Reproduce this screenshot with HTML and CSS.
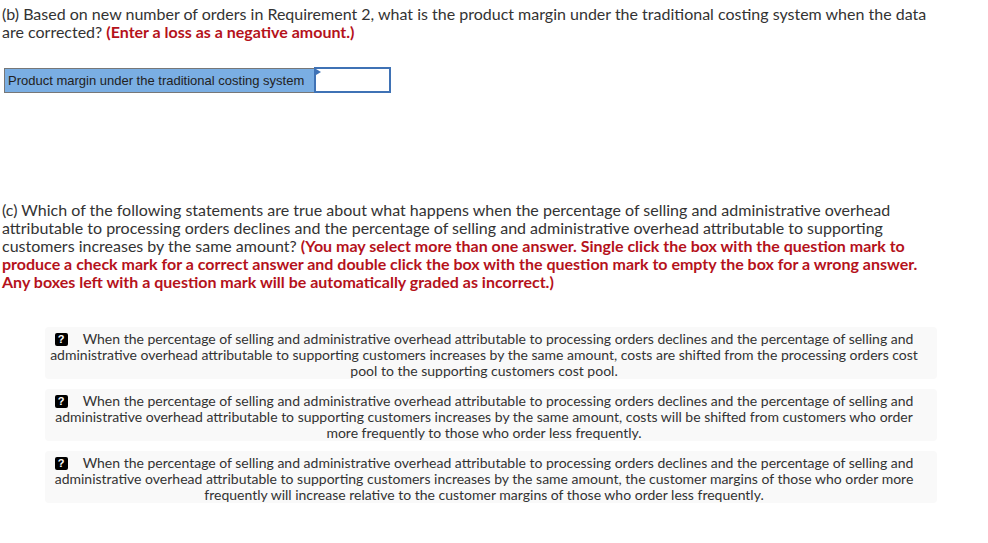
FILE: index.html
```html
<!DOCTYPE html>
<html>
<head>
<meta charset="utf-8">
<link rel="stylesheet" href="styles.css">
</head>
<body>
<div class="page">
  <p class="q">(b) Based on new number of orders in Requirement 2, what is the product margin under the traditional costing system when the data are corrected? <strong class="red">(Enter a loss as a negative amount.)</strong></p>
  <table class="ans">
    <tr>
      <td class="label">Product margin under the traditional costing system</td>
      <td class="input"><span class="flag"></span></td>
    </tr>
  </table>
  <p class="q qc">(c) Which of the following statements are true about what happens when the percentage of selling and administrative overhead attributable to processing orders declines and the percentage of selling and administrative overhead attributable to supporting customers increases by the same amount? <strong class="red">(You may select more than one answer. Single click the box with the question mark to produce a check mark for a correct answer and double click the box with the question mark to empty the box for a wrong answer. Any boxes left with a question mark will be automatically graded as incorrect.)</strong></p>
  <div class="options">
    <div class="opt"><span class="qm">?</span><span class="txt">When the percentage of selling and administrative overhead attributable to processing orders declines and the percentage of selling and administrative overhead attributable to supporting customers increases by the same amount, costs are shifted from the processing orders cost pool to the supporting customers cost pool.</span></div>
    <div class="opt"><span class="qm">?</span><span class="txt">When the percentage of selling and administrative overhead attributable to processing orders declines and the percentage of selling and administrative overhead attributable to supporting customers increases by the same amount, costs will be shifted from customers who order more frequently to those who order less frequently.</span></div>
    <div class="opt"><span class="qm">?</span><span class="txt">When the percentage of selling and administrative overhead attributable to processing orders declines and the percentage of selling and administrative overhead attributable to supporting customers increases by the same amount, the customer margins of those who order more frequently will increase relative to the customer margins of those who order less frequently.</span></div>
  </div>
</div>
</body>
</html>
```
FILE: styles.css
```css
html, body { margin: 0; padding: 0; background: #fff; }
body { font-family: Lato, "Open Sans", sans-serif; color: #333; }
.page { padding: 0 0 0 2px; width: 940px; }
.q { margin: 0; font-size: 16px; line-height: 18px; padding-top: 5px; }
.red { color: #b5121b; font-weight: 700; }
.ans { border-collapse: collapse; margin: 26px 0 0 2px; border: 1px solid #777; font-family: "Liberation Sans", Arial, sans-serif; }
.ans td { padding: 0; height: 22px; }
.label { background: #7aaee3; color: #222; font-size: 13px; padding: 0 8px 0 3px !important; width: 298px; border-right: 1px solid #777; }
.input { width: 73px; border: 2px solid #3f72b5; position: relative; background: #fff; }
.flag { position: absolute; left: 0; top: 0; width: 0; height: 0; border-top: 3px solid transparent; border-bottom: 3px solid transparent; border-left: 5px solid #3f72b5; }
.qc { margin-top: 103px; }
.options { margin: 36px 0 0 43px; width: 892px; display: flex; flex-direction: column; gap: 10px; }
.opt { background: #f9f9f9; border-radius: 4px; font-size: 14px; line-height: 16px; text-align: center; padding: 4px 18px 0 4px; color: #333; }
.qm { display: inline-block; width: 13px; height: 13px; background: #000; color: #fff; border-radius: 2px; font-size: 11px; font-weight: 700; line-height: 13px; text-align: center; margin-right: 15px; vertical-align: top; margin-top: 2px; font-family: "Liberation Sans", Arial, sans-serif; }
```
